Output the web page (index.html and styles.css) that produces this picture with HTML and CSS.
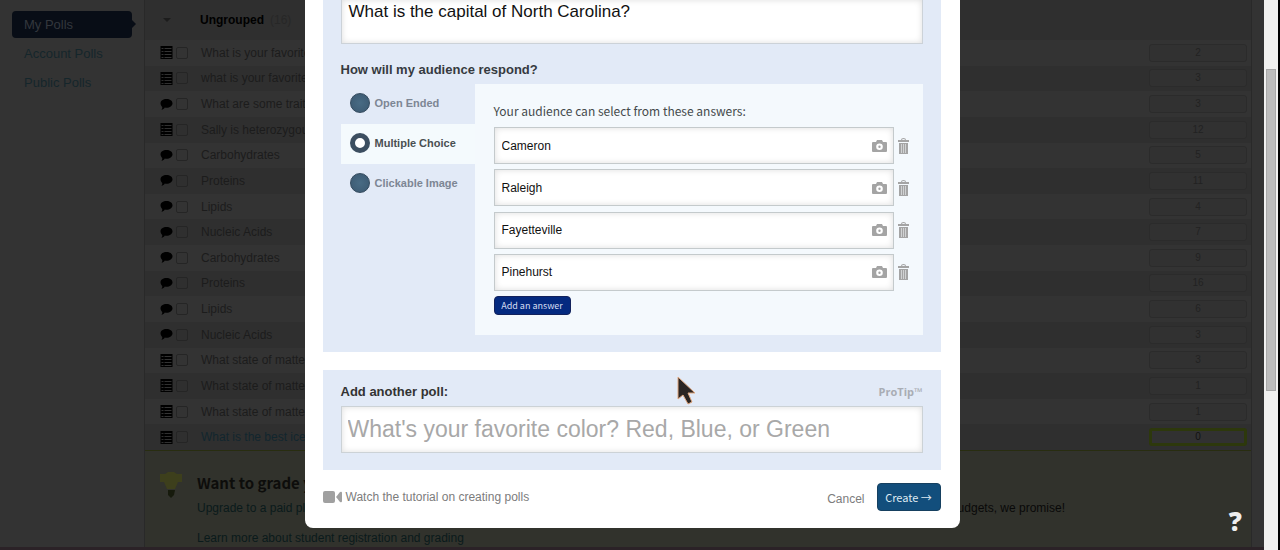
FILE: index.html
```html
<!DOCTYPE html>
<html lang="en">

<head>
    <meta charset="UTF-8">
    <meta name="viewport" content="width=device-width, initial-scale=1.0">
    <title>My Polls</title>
    <link rel="stylesheet" href="styles.css">
</head>

<body>
    <!-- shared icons -->
    <svg class="sprite" aria-hidden="true">
        <symbol id="icon-list" viewBox="0 0 12 13">
            <path fill-rule="evenodd" d="M0 0h12v13H0zM1 2v1h2V2zm3 0v1h7V2zM1 5v1h2V5zm3 0v1h7V5zM1 8v1h2V8zm3 0v1h7V8zM1 11v1h2v-1zm3 0v1h7v-1z" />
        </symbol>
        <symbol id="icon-bubble" viewBox="0 0 12 13">
            <path d="M6 1c3.4 0 6 1.8 6 4.300S9.400 9.800 6 9.800c-.6 0-1.200 0-1.700-.2C3.500 11 2.400 11.700 1 12c.6-.8.9-1.900.8-3C.7 8.100 0 6.800 0 5.300 0 2.800 2.600 1 6 1z" />
        </symbol>
        <symbol id="icon-camera" viewBox="0 0 15 12">
            <path fill-rule="evenodd" d="M1 2h3l1-2h5l1 2h3q1 0 1 1v8q0 1-1 1H1q-1 0-1-1V3q0-1 1-1zm6.500 1.500a3.300 3.300 0 1 0 0 6.600 3.300 3.300 0 0 0 0-6.600zm0 2.100a1.200 1.200 0 1 1 0 2.400 1.200 1.200 0 0 1 0-2.400z" />
        </symbol>
        <symbol id="icon-trash" viewBox="0 0 11 16">
            <path fill-rule="evenodd" d="M3 2q0-2 2.500-2T8 2h3v2H0V2zm1 0h3q0-1-1.500-1T4 2zM1 5h9v11H1z" />
            <path stroke="#d0d2d3" d="M3.500 6v9M5.500 6v9M7.500 6v9" />
        </symbol>
    </svg>

    <div class="page">
        <nav class="sidebar">
            <a class="active" href="#">My Polls</a>
            <a href="#">Account Polls</a>
            <a href="#">Public Polls</a>
        </nav>

        <main class="content">
            <div class="group">
                <span class="arrow"></span>
                <h2>Ungrouped</h2>
                <span class="total">(16)</span>
            </div>
            <table class="polls">
                <tr><td class="kind"><svg><use href="#icon-list" /></svg></td><td class="check"><input type="checkbox" aria-label="Select poll"></td><td>What is your favorite color?</td><td class="count"><span>2</span></td></tr>
                <tr><td class="kind"><svg><use href="#icon-list" /></svg></td><td class="check"><input type="checkbox" aria-label="Select poll"></td><td>what is your favorite food?</td><td class="count"><span>3</span></td></tr>
                <tr><td class="kind"><svg><use href="#icon-bubble" /></svg></td><td class="check"><input type="checkbox" aria-label="Select poll"></td><td>What are some traits?</td><td class="count"><span>3</span></td></tr>
                <tr><td class="kind"><svg><use href="#icon-list" /></svg></td><td class="check"><input type="checkbox" aria-label="Select poll"></td><td>Sally is heterozygous</td><td class="count"><span>12</span></td></tr>
                <tr><td class="kind"><svg><use href="#icon-bubble" /></svg></td><td class="check"><input type="checkbox" aria-label="Select poll"></td><td>Carbohydrates</td><td class="count"><span>5</span></td></tr>
                <tr><td class="kind"><svg><use href="#icon-bubble" /></svg></td><td class="check"><input type="checkbox" aria-label="Select poll"></td><td>Proteins</td><td class="count"><span>11</span></td></tr>
                <tr><td class="kind"><svg><use href="#icon-bubble" /></svg></td><td class="check"><input type="checkbox" aria-label="Select poll"></td><td>Lipids</td><td class="count"><span>4</span></td></tr>
                <tr><td class="kind"><svg><use href="#icon-bubble" /></svg></td><td class="check"><input type="checkbox" aria-label="Select poll"></td><td>Nucleic Acids</td><td class="count"><span>7</span></td></tr>
                <tr><td class="kind"><svg><use href="#icon-bubble" /></svg></td><td class="check"><input type="checkbox" aria-label="Select poll"></td><td>Carbohydrates</td><td class="count"><span>9</span></td></tr>
                <tr><td class="kind"><svg><use href="#icon-bubble" /></svg></td><td class="check"><input type="checkbox" aria-label="Select poll"></td><td>Proteins</td><td class="count"><span>16</span></td></tr>
                <tr><td class="kind"><svg><use href="#icon-bubble" /></svg></td><td class="check"><input type="checkbox" aria-label="Select poll"></td><td>Lipids</td><td class="count"><span>6</span></td></tr>
                <tr><td class="kind"><svg><use href="#icon-bubble" /></svg></td><td class="check"><input type="checkbox" aria-label="Select poll"></td><td>Nucleic Acids</td><td class="count"><span>3</span></td></tr>
                <tr><td class="kind"><svg><use href="#icon-list" /></svg></td><td class="check"><input type="checkbox" aria-label="Select poll"></td><td>What state of matter</td><td class="count"><span>3</span></td></tr>
                <tr><td class="kind"><svg><use href="#icon-list" /></svg></td><td class="check"><input type="checkbox" aria-label="Select poll"></td><td>What state of matter</td><td class="count"><span>1</span></td></tr>
                <tr><td class="kind"><svg><use href="#icon-list" /></svg></td><td class="check"><input type="checkbox" aria-label="Select poll"></td><td>What state of matter</td><td class="count"><span>1</span></td></tr>
                <tr class="open"><td class="kind"><svg><use href="#icon-list" /></svg></td><td class="check"><input type="checkbox" aria-label="Select poll"></td><td><a href="#">What is the best ice cream?</a></td><td class="count"><span>0</span></td></tr>
            </table>
            <div class="upgrade">
                <svg class="bulb" viewBox="0 0 22 28">
                    <path fill="#3d3f1c" d="M0 3h5L8 1h6l3 2h5v8h-4l-3 7H7l-3-7H0z" />
                    <path fill="#161a0c" d="M8 19h7l-1 5-3 3-3-3z" />
                </svg>
                <div class="upgrade-text">
                    <h3>Want to grade your students?</h3>
                    <p><a href="#">Upgrade to a paid plan</a><span>We fit all budgets, we promise!</span></p>
                    <p><a href="#">Learn more about student registration and grading</a></p>
                </div>
            </div>
        </main>
    </div>

    <div class="overlay">
        <form class="modal">
            <section class="box first">
                <textarea class="question" aria-label="Question">What is the capital of North Carolina?</textarea>
                <h4>How will my audience respond?</h4>
                <div class="respond">
                    <div class="types">
                        <label><input type="radio" name="type">Open Ended</label>
                        <label class="selected"><input type="radio" name="type" checked>Multiple Choice</label>
                        <label><input type="radio" name="type">Clickable Image</label>
                    </div>
                    <div class="panel">
                        <p>Your audience can select from these answers:</p>
                        <div class="answers">
                            <div class="answer">
                                <input type="text" aria-label="Answer 1" value="Cameron">
                                <button type="button" class="camera" aria-label="Add image"><svg><use href="#icon-camera" /></svg></button>
                                <button type="button" class="trash" aria-label="Delete"><svg><use href="#icon-trash" /></svg></button>
                            </div>
                            <div class="answer">
                                <input type="text" aria-label="Answer 2" value="Raleigh">
                                <button type="button" class="camera" aria-label="Add image"><svg><use href="#icon-camera" /></svg></button>
                                <button type="button" class="trash" aria-label="Delete"><svg><use href="#icon-trash" /></svg></button>
                            </div>
                            <div class="answer">
                                <input type="text" aria-label="Answer 3" value="Fayetteville">
                                <button type="button" class="camera" aria-label="Add image"><svg><use href="#icon-camera" /></svg></button>
                                <button type="button" class="trash" aria-label="Delete"><svg><use href="#icon-trash" /></svg></button>
                            </div>
                            <div class="answer">
                                <input type="text" aria-label="Answer 4" value="Pinehurst">
                                <button type="button" class="camera" aria-label="Add image"><svg><use href="#icon-camera" /></svg></button>
                                <button type="button" class="trash" aria-label="Delete"><svg><use href="#icon-trash" /></svg></button>
                            </div>
                        </div>
                        <button type="button" class="add">Add an answer</button>
                    </div>
                </div>
            </section>

            <section class="box">
                <div class="another">
                    <label for="another">Add another poll:</label>
                    <a href="#">ProTip™</a>
                </div>
                <input type="text" id="another" placeholder="What's your favorite color? Red, Blue, or Green">
            </section>

            <div class="actions">
                <a class="tutorial" href="#">
                    <svg viewBox="0 0 19 12"><rect width="12" height="12" rx="2" /><path d="M13 6l4-5q2-1 2 1v8q0 2-2 1z" /></svg>
                    Watch the tutorial on creating polls
                </a>
                <a class="cancel" href="#">Cancel</a>
                <button type="button" class="create">Create →</button>
            </div>
        </form>
    </div>

    <button class="help" aria-label="Help">?</button>
    <div class="scrollbar"><div class="thumb"></div></div>
    <svg class="cursor" viewBox="0 0 19 30">
        <path fill="#2b2523" stroke="#e0a880" d="M1 1v22l5-4 5 9 4-2-4-9h7z" />
    </svg>
</body>

</html>
```
FILE: styles.css
```css
* {
    box-sizing: border-box;
}

body {
    margin: 0;
    height: 100vh;
    overflow: hidden;
    background-color: #333;
    font-family: "Liberation Sans", Arial, sans-serif;
    font-size: 12px;
}

h2, h3, h4, p {
    margin: 0;
}

a {
    text-decoration: none;
}

button {
    padding: 0;
    border: none;
    background: none;
}

.sprite {
    display: none;
}

/* page behind the dialog */
.page {
    display: flex;
    height: 100vh;
    padding-right: 28px;
    border-bottom: 3px solid #2b2227;
}

.sidebar {
    width: 144px;
    padding: 11px 12px;
    font-size: 13px;
}

.sidebar a {
    display: block;
    margin-bottom: 2px;
    padding-left: 12px;
    line-height: 27px;
    color: #15262b;
}

.sidebar .active {
    position: relative;
    border-radius: 4px;
    background-color: #080d16;
    color: #33373d;
}

.sidebar .active::after {
    content: "";
    position: absolute;
    right: -4px;
    top: 9px;
    border: 4px solid transparent;
    border-left-color: #080d16;
    border-right: none;
}

.content {
    flex: 1;
    border-left: 1px solid #292929;
    border-right: 1px solid #292929;
}

.group {
    display: flex;
    align-items: center;
    height: 40px;
    padding-left: 18px;
    background-color: #2f2f2f;
    color: #272727;
}

.group .arrow {
    border: 4px solid transparent;
    border-top-color: #1c1c1c;
    border-bottom: none;
}

.group h2 {
    margin: 0 6px 0 29px;
    font-size: 12px;
    color: #000;
}

.polls {
    width: 100%;
    height: 410px;
    border-collapse: collapse;
    color: #1c1c1c;
}

.polls tr:nth-child(even) {
    background-color: #2f2f2f;
}

.polls td {
    padding: 0;
}

.polls .kind {
    width: 31px;
    padding-left: 15px;
}

.polls svg {
    display: block;
    width: 13px;
    height: 13px;
}

.polls .check {
    width: 25px;
}

.polls .check input {
    display: block;
    appearance: none;
    width: 12px;
    height: 12px;
    margin: 0;
    border: 1px solid #252525;
    border-radius: 2px;
}

.polls a {
    color: #12262e;
}

.polls .count {
    width: 102px;
    padding-right: 4px;
    font-size: 10px;
    text-align: center;
}

.polls .count span {
    display: block;
    border: 1px solid #2b2b2b;
    border-radius: 3px;
    line-height: 16px;
    background-color: #313131;
    color: #222;
}

.polls .open .count span {
    border: 3px solid #2d380c;
    line-height: 12px;
    color: #111;
}

.upgrade {
    display: flex;
    gap: 15px;
    height: 97px;
    padding: 20px 15px 0;
    border-top: 1px solid #282d10;
    background-color: #31322c;
}

.bulb {
    width: 22px;
    height: 28px;
}

.upgrade-text {
    flex: 1;
    max-width: 868px;
}

.upgrade-text h3 {
    font-family: "Noto Sans CJK SC", sans-serif;
    font-size: 15px;
    line-height: 24px;
    color: #0d0d0b;
}

.upgrade-text p {
    display: flex;
    justify-content: space-between;
    margin-bottom: 4px;
    line-height: 26px;
    color: #090909;
}

.upgrade-text a {
    color: #0a1a1b;
}

/* dialog */
.overlay {
    position: absolute;
    inset: 0 16px 0 0;
    display: flex;
    justify-content: center;
    align-items: flex-start;
}

.modal {
    width: 655px;
    padding: 0 19px 17px 18px;
    border-radius: 0 0 8px 8px;
    background-color: #fff;
}

.box {
    padding: 0 18px 17px;
    background-color: #e2eaf7;
}

.box.first {
    margin-bottom: 18px;
}

.question {
    display: block;
    width: 100%;
    height: 44px;
    padding: 0 7px;
    border: 1px solid #ccd2d8;
    border-top: none;
    box-shadow: inset 0 0 6px #ddd;
    background-color: #fff;
    resize: none;
    overflow: hidden;
    font-family: "Liberation Sans", Arial, sans-serif;
    font-size: 17px;
    line-height: 24px;
    color: #111;
}

.box h4 {
    padding: 18px 0 6px;
    font-size: 13px;
    line-height: 16px;
    color: #363a40;
}

.respond {
    display: flex;
}

.types {
    width: 134px;
}

.types label {
    display: flex;
    align-items: center;
    gap: 5px;
    height: 40px;
    padding: 0 10px 2px 9px;
    font-size: 11px;
    font-weight: bold;
    white-space: nowrap;
    color: #7d8694;
}

.types .selected {
    background-color: #f4fafd;
    color: #4a5052;
}

.types input {
    appearance: none;
    flex-shrink: 0;
    width: 20px;
    height: 20px;
    margin: 0;
    border: 1px solid #344a5e;
    border-radius: 50%;
    background: radial-gradient(#486b84, #3b5870);
}

.types input:checked {
    border: 5px solid #3c4e60;
    background: #fff;
}

.panel {
    flex: 1;
    padding: 15px 14px 20px 19px;
    background-color: #f4f9fd;
}

.panel p {
    margin-bottom: 4px;
    font-family: "Noto Sans CJK SC", sans-serif;
    font-size: 12px;
    line-height: 24px;
    color: #444a4c;
}

.answers {
    display: flex;
    flex-direction: column;
    justify-content: space-between;
    height: 164px;
    margin-bottom: 5px;
}

.answer {
    position: relative;
    display: flex;
    align-items: center;
    justify-content: space-between;
}

.answer input {
    width: 400px;
    height: 37px;
    padding: 0 30px 0 7px;
    border: 1px solid #c4cacc;
    box-shadow: inset 0 0 6px #ddd;
    background-color: #fff;
    font-family: "Liberation Sans", Arial, sans-serif;
    font-size: 12px;
    color: #111;
}

.answer svg {
    display: block;
    width: 100%;
    height: 100%;
    fill: #a4a4a4;
}

.camera {
    position: absolute;
    left: 378px;
    width: 15px;
    height: 12px;
}

.trash {
    width: 11px;
    height: 16px;
}

.add {
    display: block;
    width: 77px;
    height: 19px;
    border: 1px solid #12225c;
    border-radius: 4px;
    background-color: #042a80;
    font-family: "Noto Sans CJK SC", sans-serif;
    font-size: 9px;
    line-height: 16px;
    color: #d4def2;
}

.another {
    display: flex;
    justify-content: space-between;
    align-items: center;
    padding: 13px 0 5px;
    font-size: 13px;
    line-height: 18px;
    font-weight: bold;
    color: #333;
}

.another a {
    font-family: "Open Sans", sans-serif;
    font-size: 11px;
    color: #a9adb4;
}

#another {
    display: block;
    width: 100%;
    height: 47px;
    padding: 0 6px;
    border: 1px solid #ccd2d6;
    box-shadow: inset 0 0 6px #ddd;
    background-color: #fff;
    font-family: "Liberation Sans", Arial, sans-serif;
    font-size: 23px;
}

#another::placeholder {
    color: #a8a8a8;
}

.actions {
    display: flex;
    align-items: center;
    padding-top: 13px;
}

.tutorial {
    display: flex;
    align-items: center;
    gap: 4px;
    margin-right: auto;
    color: #7c7c7c;
}

.tutorial svg {
    width: 19px;
    height: 12px;
    fill: #a0a0a0;
}

.cancel {
    margin-right: 12px;
    padding-top: 4px;
    color: #7c7c7c;
}

.create {
    width: 64px;
    height: 28px;
    border: 1px solid #164060;
    border-radius: 4px;
    background-color: #124e7c;
    font-family: "Noto Sans CJK SC", sans-serif;
    font-size: 11px;
    color: #dfeaf2;
}

.help {
    position: absolute;
    right: 38px;
    bottom: 13px;
    font-family: "Open Sans", sans-serif;
    font-size: 26px;
    font-weight: 800;
    line-height: 32px;
    color: #eee;
}

.scrollbar {
    position: absolute;
    inset: 0 0 0 auto;
    width: 16px;
    padding: 69px 2px 0;
    border-right: 2px solid #000;
    background-color: #f1f1f0;
}

.thumb {
    height: 322px;
    border: 1px solid #a8a8a8;
    background-color: #bcbcbc;
}

.cursor {
    position: absolute;
    left: 677px;
    top: 376px;
    width: 19px;
    height: 30px;
}
```
